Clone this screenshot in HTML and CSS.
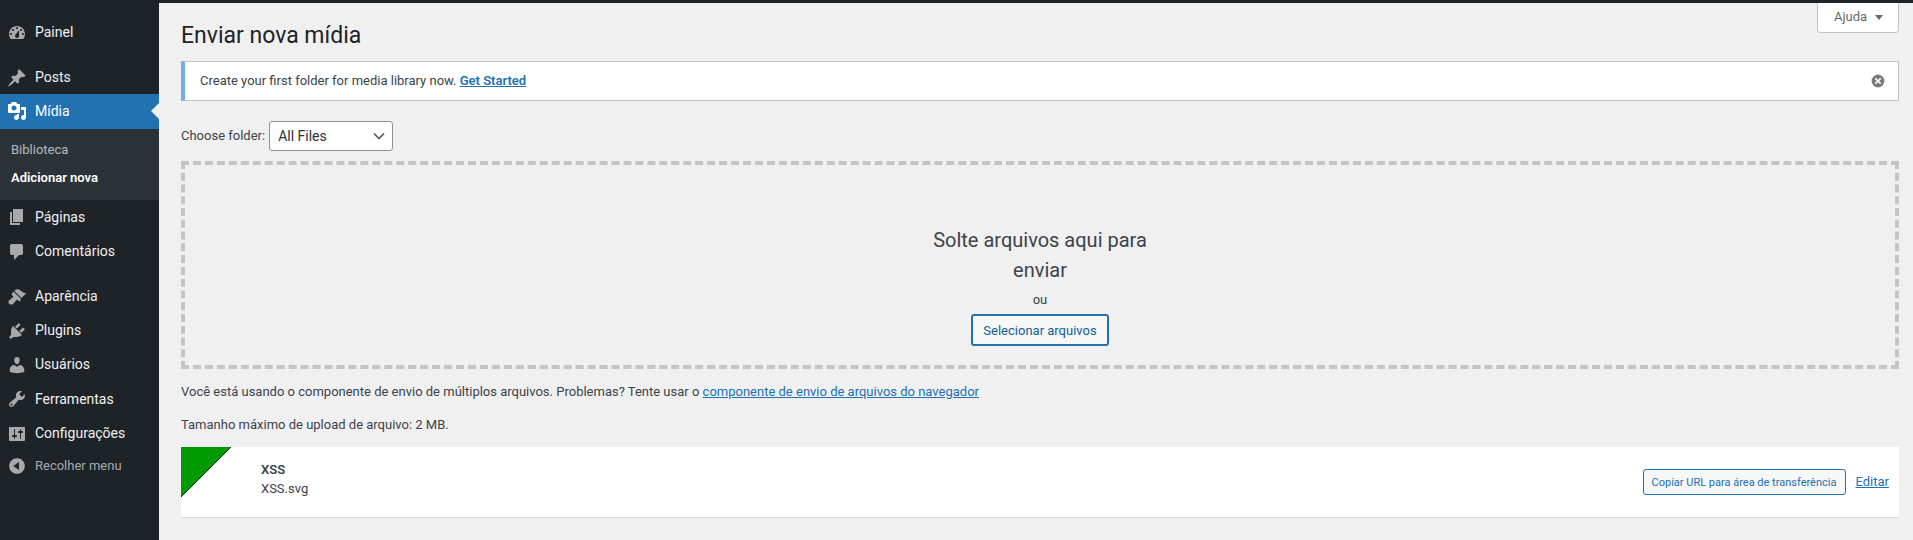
FILE: index.html
```html
<!DOCTYPE html>
<html lang="pt-BR">

<head>
    <meta charset="UTF-8">
    <meta name="viewport" content="width=device-width, initial-scale=1.0">
    <title>Enviar nova mídia</title>
    <link rel="stylesheet" href="styles.css">
</head>

<body>
    <div class="topbar"></div>

    <div class="wrap">
        <nav class="sidebar">
            <ul class="menu">
                <li class="item">
                    <svg class="ico" viewBox="0 0 20 20"><path fill-rule="evenodd" d="M3.76 16h12.48c1.1-1.37 1.76-3.11 1.76-5 0-4.42-3.58-8-8-8s-8 3.58-8 8c0 1.89.66 3.63 1.76 5zM10 4c.55 0 1 .45 1 1s-.45 1-1 1-1-.45-1-1 .45-1 1-1zM6 6c.55 0 1 .45 1 1s-.45 1-1 1-1-.45-1-1 .45-1 1-1zm8 0c.55 0 1 .45 1 1s-.45 1-1 1-1-.45-1-1 .45-1 1-1zm-5.37 5.55L12 7v6c0 1.1-.9 2-2 2s-2-.9-2-2c0-.57.24-1.08.63-1.45zM4 10c.55 0 1 .45 1 1s-.45 1-1 1-1-.45-1-1 .45-1 1-1zm12 0c.55 0 1 .45 1 1s-.45 1-1 1-1-.45-1-1 .45-1 1-1z"/></svg>
                    <span>Painel</span>
                </li>
                <li class="item sep-wide">
                    <svg class="ico" viewBox="0 0 20 20"><path d="M10.44 3.02l1.82-1.82 6.36 6.35-1.83 1.82c-1.05-.68-2.48-.57-3.41.36l-.75.75c-.92.93-1.04 2.35-.35 3.41l-1.83 1.82-2.41-2.41-2.8 2.79c-.42.42-3.38 2.71-3.8 2.29s1.86-3.39 2.28-3.81l2.79-2.79L4.1 9.36l1.83-1.82c1.05.69 2.48.57 3.4-.36l.75-.75c.93-.92 1.05-2.35.36-3.41z"/></svg>
                    <span>Posts</span>
                </li>
                <li class="item current">
                    <svg class="ico" viewBox="0 0 20 20"><path fill-rule="evenodd" d="M13 11V4c0-.55-.45-1-1-1h-1.67L9 1H5L3.67 3H2c-.55 0-1 .45-1 1v7c0 .55.45 1 1 1h10c.55 0 1-.45 1-1zM7 4.5c1.38 0 2.5 1.12 2.5 2.5S8.38 9.5 7 9.5 4.5 8.38 4.5 7 5.62 4.5 7 4.5zM14 6h5v10.5c0 1.38-1.12 2.5-2.5 2.5S14 17.88 14 16.5s1.12-2.5 2.5-2.5c.17 0 .34.02.5.05V9h-3V6zm-4 8.05V13h2v3.5c0 1.38-1.12 2.5-2.5 2.5S7 17.88 7 16.5 8.12 14 9.5 14c.17 0 .34.02.5.05z"/></svg>
                    <span>Mídia</span>
                </li>
                <li class="submenu">
                    <a class="sublink">Biblioteca</a>
                    <a class="sublink active">Adicionar nova</a>
                </li>
                <li class="item">
                    <svg class="ico" viewBox="0 0 20 20"><path d="M6 15V2h10v13H6zm-1 1h8v2H3V5h2v11z"/></svg>
                    <span>Páginas</span>
                </li>
                <li class="item">
                    <svg class="ico" viewBox="0 0 20 20"><path d="M5 2h9c1.1 0 2 .9 2 2v7c0 1.1-.9 2-2 2h-2l-5 5v-5H5c-1.1 0-2-.9-2-2V4c0-1.1.9-2 2-2z"/></svg>
                    <span>Comentários</span>
                </li>
                <li class="item sep-wide">
                    <svg class="ico" viewBox="0 0 20 20"><path d="M14.48 11.06L7.41 3.99l1.5-1.5c.5-.56 2.3-.47 3.51.32 1.21.8 1.43 1.28 2.91 2.1 1.18.64 2.45 1.26 4.45.85zm-.71.71L6.7 4.7 4.93 6.47c-.39.39-.39 1.02 0 1.41l1.06 1.06c.39.39.39 1.03 0 1.42-.6.6-1.43 1.11-2.21 1.69-.35.26-.7.53-1.01.84C1.43 13.23.91 15.21 2.11 16.7c1.21 1.5 3.42.79 4.75-.53.31-.31.57-.66.84-1.01.58-.78 1.09-1.61 1.69-2.21.39-.39 1.02-.39 1.41 0l1.06 1.06c.39.39 1.02.39 1.41 0z"/></svg>
                    <span>Aparência</span>
                </li>
                <li class="item">
                    <svg class="ico" viewBox="0 0 20 20"><path d="M13.11 4.36L9.87 7.6 8 5.73l3.24-3.24c.35-.34 1.05-.2 1.56.32.52.51.66 1.21.31 1.55zm-8 1.77l.91-1.12 9.01 9.01-1.19.84c-.71.71-2.63 1.16-3.82 1.16H6.14L4.9 17.26c-.59.59-1.54.59-2.12 0-.59-.58-.59-1.53 0-2.12l1.24-1.24v-3.88c0-1.13.4-3.19 1.09-3.89zm7.26 3.97l3.24-3.24c.34-.35 1.04-.21 1.55.31.52.51.66 1.21.31 1.55l-3.24 3.25z"/></svg>
                    <span>Plugins</span>
                </li>
                <li class="item">
                    <svg class="ico" viewBox="0 0 20 20"><path d="M10 9.25c-2.27 0-2.73-3.44-2.73-3.44C7 4.02 7.82 2 9.97 2c2.16 0 2.98 2.02 2.71 3.81 0 0-.41 3.44-2.68 3.44zm0 2.57L12.72 10c2.39 0 4.52 2.33 4.52 4.53v2.49s-3.65 1.13-7.24 1.13c-3.65 0-7.24-1.13-7.24-1.13v-2.49c0-2.25 1.94-4.48 4.47-4.48z"/></svg>
                    <span>Usuários</span>
                </li>
                <li class="item">
                    <svg class="ico" viewBox="0 0 20 20"><path fill-rule="evenodd" d="M16.68 9.77c-1.34 1.34-3.3 1.67-4.95.99l-5.41 6.52c-.99.99-2.59.99-3.58 0s-.99-2.59 0-3.57l6.52-5.42c-.68-1.65-.35-3.61.99-4.95 1.28-1.28 3.12-1.62 4.72-1.06l-2.89 2.89 2.82 2.82 2.86-2.87c.53 1.58.18 3.39-1.08 4.65zM3.81 16.21c.4.39 1.04.39 1.43 0 .4-.4.4-1.04 0-1.43-.39-.4-1.03-.4-1.43 0-.39.39-.39 1.03 0 1.43z"/></svg>
                    <span>Ferramentas</span>
                </li>
                <li class="item">
                    <svg class="ico" viewBox="0 0 20 20"><path fill-rule="evenodd" d="M18 16V4c0-.55-.45-1-1-1H3c-.55 0-1 .45-1 1v12c0 .55.45 1 1 1h14c.55 0 1-.45 1-1zM8 11h1c.55 0 1 .45 1 1s-.45 1-1 1H8v1.5c0 .28-.22.5-.5.5s-.5-.22-.5-.5V13H6c-.55 0-1-.45-1-1s.45-1 1-1h1V5.5c0-.28.22-.5.5-.5s.5.22.5.5V11zm5-2h-1c-.55 0-1-.45-1-1s.45-1 1-1h1V5.5c0-.28.22-.5.5-.5s.5.22.5.5V7h1c.55 0 1 .45 1 1s-.45 1-1 1h-1v5.5c0 .28-.22.5-.5.5s-.5-.22-.5-.5V9z"/></svg>
                    <span>Configurações</span>
                </li>
                <li class="item collapse">
                    <svg class="ico" viewBox="0 0 20 20"><path fill-rule="evenodd" d="M10 2.16c4.33 0 7.84 3.51 7.84 7.84s-3.51 7.84-7.84 7.84S2.16 14.33 2.16 10 5.71 2.16 10 2.16zm2 11.72V6.12L6.18 9.97z"/></svg>
                    <span>Recolher menu</span>
                </li>
            </ul>
        </nav>

        <main class="content">
            <div class="head">
                <h1>Enviar nova mídia</h1>
                <div class="help-tab">Ajuda <span class="caret"></span></div>
            </div>

            <div class="notice">
                <p>Create your first folder for media library now. <a href="#" class="strong-link">Get Started</a></p>
                <svg class="dismiss" viewBox="0 0 20 20"><circle cx="10" cy="10" r="8"/><path class="dismiss-x" d="M14 7.4L11.4 10l2.6 2.6-1.4 1.4L10 11.4 7.4 14 6 12.6 8.6 10 6 7.4 7.4 6 10 8.6 12.6 6z"/></svg>
            </div>

            <div class="folder-row">
                <label for="folder">Choose folder:</label>
                <div class="select" id="folder">
                    <span class="select-value">All Files</span>
                    <svg class="chevron" viewBox="0 0 12 8"><path d="M1 1.5l5 5 5-5"/></svg>
                </div>
            </div>

            <div class="dropzone">
                <p class="drop-title">Solte arquivos aqui para enviar</p>
                <p class="drop-or">ou</p>
                <button class="btn-select" type="button">Selecionar arquivos</button>
            </div>

            <p class="info first">Você está usando o componente de envio de múltiplos arquivos. Problemas? Tente usar o <a href="#">componente de envio de arquivos do navegador</a></p>
            <p class="info second">Tamanho máximo de upload de arquivo: 2 MB.</p>

            <div class="media-item">
                <svg class="thumb" viewBox="0 0 50 50"><path d="M0 0H50L0 50Z"/><path class="thumb-edge" d="M50 0L0 50"/></svg>
                <div class="media-name">
                    <strong>XSS</strong>
                    <span>XSS.svg</span>
                </div>
                <button class="btn-copy" type="button">Copiar URL para área de transferência</button>
                <a href="#" class="edit-link">Editar</a>
            </div>
        </main>
    </div>
</body>

</html>
```

FILE: styles.css
```css
* {
    margin: 0;
    padding: 0;
    box-sizing: border-box;
}

html,
body {
    height: 100%;
    overflow: hidden;
}

body {
    background-color: #f0f0f1;
    color: #3c434a;
    font-family: Roboto, "Liberation Sans", sans-serif;
    font-size: 13px;
    line-height: 1.4;
    display: flex;
    flex-direction: column;
}

a {
    color: #2271b1;
}

.topbar {
    height: 3px;
    flex-shrink: 0;
    background-color: #1d2327;
}

.wrap {
    flex: 1;
    display: flex;
    min-height: 0;
}

/* sidebar */
.sidebar {
    width: 159px;
    flex-shrink: 0;
    background-color: #1d2327;
}

.menu {
    list-style: none;
    padding-top: 13px;
}

.item {
    position: relative;
    display: flex;
    align-items: center;
    gap: 8px;
    height: 34.2px;
    padding-left: 7px;
    color: #f0f0f1;
    font-size: 14px;
}

.ico {
    width: 20px;
    height: 20px;
    flex-shrink: 0;
    fill: #a7aaad;
}

.sep-wide {
    margin-top: 11px;
}

.current {
    height: 35px;
    margin-top: -1.4px;
    background-color: #2271b1;
    color: #fff;
}

.current .ico {
    fill: #fff;
}

.current::after {
    content: "";
    position: absolute;
    right: 0;
    top: 50%;
    margin-top: -8px;
    border: 8px solid transparent;
    border-right-color: #f0f0f1;
    border-left-width: 0;
}

.submenu {
    display: flex;
    flex-direction: column;
    padding: 7px 0 8px;
    background-color: #2c3338;
}

.sublink {
    padding: 5px 0 5px 11px;
    color: rgba(240, 246, 252, 0.7);
}

.sublink.active {
    color: #fff;
    font-weight: 600;
}

.collapse {
    margin-top: -2px;
    color: #a7aaad;
    font-size: 13px;
}

/* main column */
.content {
    flex: 1;
    min-width: 0;
    padding: 0 14px 0 22px;
}

.head {
    display: flex;
    justify-content: space-between;
    align-items: flex-start;
    height: 58px;
}

h1 {
    margin-top: 18px;
    color: #1d2327;
    font-size: 23px;
    font-weight: 400;
    line-height: 30px;
}

.help-tab {
    display: flex;
    align-items: center;
    gap: 6px;
    width: 82px;
    height: 30px;
    padding-left: 16px;
    background-color: #fff;
    border: 1px solid #c3c4c7;
    border-top: none;
    border-radius: 0 0 4px 4px;
    color: #646970;
}

.caret {
    margin-left: 2px;
    border: 4px solid transparent;
    border-top: 5px solid #646970;
    border-bottom-width: 0;
}

.notice {
    display: flex;
    align-items: center;
    justify-content: space-between;
    height: 40px;
    padding: 0 12px 0 15px;
    background-color: #fff;
    border: 1px solid #c3c4c7;
    border-left: 4px solid #72aee6;
}

.strong-link {
    color: #2271b1;
    font-weight: 600;
}

.dismiss {
    width: 16px;
    height: 16px;
    fill: #787c82;
}

.dismiss-x {
    fill: #fff;
}

.folder-row {
    display: flex;
    align-items: center;
    gap: 4px;
    margin-top: 20px;
}

.select {
    display: flex;
    align-items: center;
    justify-content: space-between;
    width: 124px;
    height: 30px;
    padding: 0 7px 0 8px;
    background-color: #fff;
    border: 1px solid #8c8f94;
    border-radius: 3px;
    color: #2c3338;
    font-size: 14px;
}

.select-value {
    padding-top: 1px;
}

.chevron {
    width: 12px;
    height: 8px;
    fill: none;
    stroke: #50575e;
    stroke-width: 1.6;
}

.dropzone {
    display: flex;
    flex-direction: column;
    align-items: center;
    height: 208px;
    margin-top: 10px;
    padding-top: 60px;
    border: 4px dashed #c3c4c7;
}

.drop-title {
    width: 250px;
    color: #3c434a;
    font-size: 20px;
    line-height: 30px;
    text-align: center;
}

.drop-or {
    margin-top: 6px;
    line-height: 18px;
}

.btn-select {
    width: 138px;
    height: 32px;
    margin-top: 5px;
    background-color: #f6f7f7;
    border: 2px solid #2271b1;
    border-radius: 3px;
    color: #135e96;
    font-family: inherit;
    font-size: 13px;
}

.info.first {
    margin-top: 14px;
}

.info.second {
    margin-top: 15px;
}

.media-item {
    display: flex;
    align-items: flex-start;
    height: 71px;
    margin-top: 13px;
    background-color: #fff;
    border-bottom: 1px solid #dcdcde;
}

.thumb {
    width: 50px;
    height: 50px;
    flex-shrink: 0;
    fill: #009900;
}

.thumb-edge {
    fill: none;
    stroke: #000;
    stroke-width: 0.8;
}

.media-name {
    flex: 1;
    display: flex;
    flex-direction: column;
    margin: 14px 0 0 30px;
}

.media-name strong {
    font-weight: 600;
}

.btn-copy {
    width: 203px;
    height: 26px;
    margin-top: 22px;
    background-color: #f6f7f7;
    border: 1px solid #2271b1;
    border-radius: 3px;
    color: #2271b1;
    font-family: inherit;
    font-size: 11px;
}

.edit-link {
    margin: 26px 10px 0 10px;
}
```
